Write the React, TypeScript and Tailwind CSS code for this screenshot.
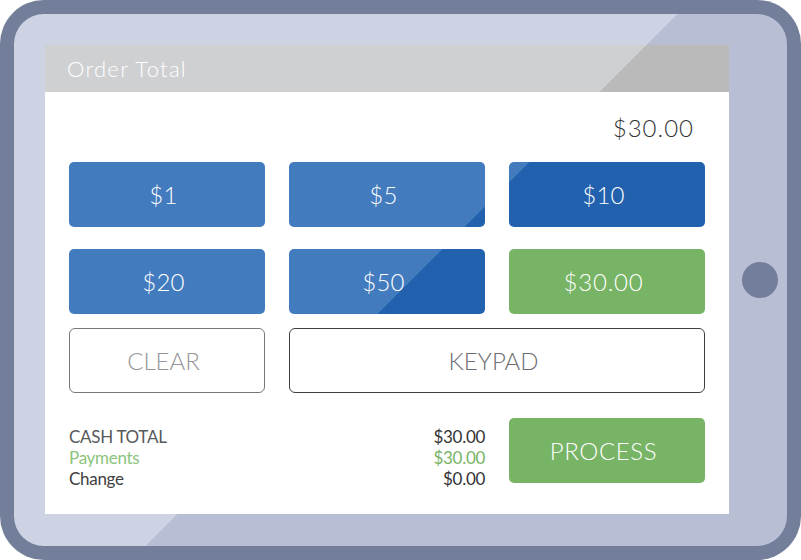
import React from "react";

const blue =
  "bg-fixed bg-[linear-gradient(135deg,#437bbf_489.3px,#2261ae_489.3px)]";

function MoneyButton({ label }: { label: string }) {
  return (
    <div
      className={`${blue} h-[65px] rounded-[5px] flex items-center justify-center pr-[7px] text-white text-[24px] leading-none tracking-[0.3px]`}
    >
      {label}
    </div>
  );
}

export default function App() {
  return (
    <div
      className="w-[801px] h-[560px] rounded-[44px] bg-[#737e9a] p-[14px] font-light"
      style={{ fontFamily: "Lato, 'Open Sans', sans-serif" }}
    >
      <div className="h-full rounded-[30px] bg-fixed bg-[linear-gradient(135deg,#cdd3e3_489.3px,#b8bed4_489.3px)] flex items-start pl-[31px] pt-[31px]">
        <div className="w-[684px] h-[469px] bg-white flex flex-col">
          <div className="h-[47px] shrink-0 bg-fixed bg-[linear-gradient(135deg,#cfd0d2_489.3px,#bababa_489.3px)] flex items-center pl-[22px] text-white text-[22px] leading-none tracking-[1.3px]">
            Order Total
          </div>
          <div className="flex flex-col px-[24px] pt-[24px]">
            <div className="text-right text-[24px] leading-[24px] text-[#333335] pr-[11px] mb-[22px] tracking-[1px]">
              $30.00
            </div>
            <div className="grid grid-cols-3 gap-x-[24px]">
              <MoneyButton label="$1" />
              <MoneyButton label="$5" />
              <MoneyButton label="$10" />
            </div>
            <div className="grid grid-cols-3 gap-x-[24px] mt-[22px]">
              <MoneyButton label="$20" />
              <MoneyButton label="$50" />
              <div className="h-[65px] rounded-[5px] bg-[#77b465] flex items-center justify-center pr-[7px] text-white text-[24px] leading-none tracking-[0.8px]">
                $30.00
              </div>
            </div>
            <div className="grid grid-cols-3 gap-x-[24px] mt-[14px]">
              <div className="h-[65px] rounded-[6px] border border-[#77787b] bg-white flex items-center justify-center pr-[7px] text-[#939598] text-[24px] leading-none">
                CLEAR
              </div>
              <div className="col-span-2 h-[65px] rounded-[6px] border border-[#3f3f42] bg-white flex items-center justify-center pr-[7px] text-[#6d6e71] text-[24px] leading-none">
                KEYPAD
              </div>
            </div>
            <div className="grid grid-cols-3 gap-x-[24px] mt-[25px]">
              <div className="col-span-2 flex justify-between pt-[8px] text-[17px] leading-[21px] font-normal tracking-[-0.3px]">
                <div className="flex flex-col">
                  <span className="text-[#58595b]">CASH TOTAL</span>
                  <span className="text-[#8cc47c]">Payments</span>
                  <span className="text-[#414042]">Change</span>
                </div>
                <div className="flex flex-col items-end">
                  <span className="text-[#333335]">$30.00</span>
                  <span className="text-[#78b466]">$30.00</span>
                  <span className="text-[#333335]">$0.00</span>
                </div>
              </div>
              <div className="h-[65px] rounded-[5px] bg-[#78b466] flex items-center justify-center pr-[7px] text-white text-[24px] leading-none tracking-[0.6px]">
                PROCESS
              </div>
            </div>
          </div>
        </div>
        <div className="flex-1 self-stretch flex items-center justify-center pl-[4px] -mt-[31px]">
          <div className="w-[36px] h-[36px] rounded-full bg-[#737e9a]" />
        </div>
      </div>
    </div>
  );
}
